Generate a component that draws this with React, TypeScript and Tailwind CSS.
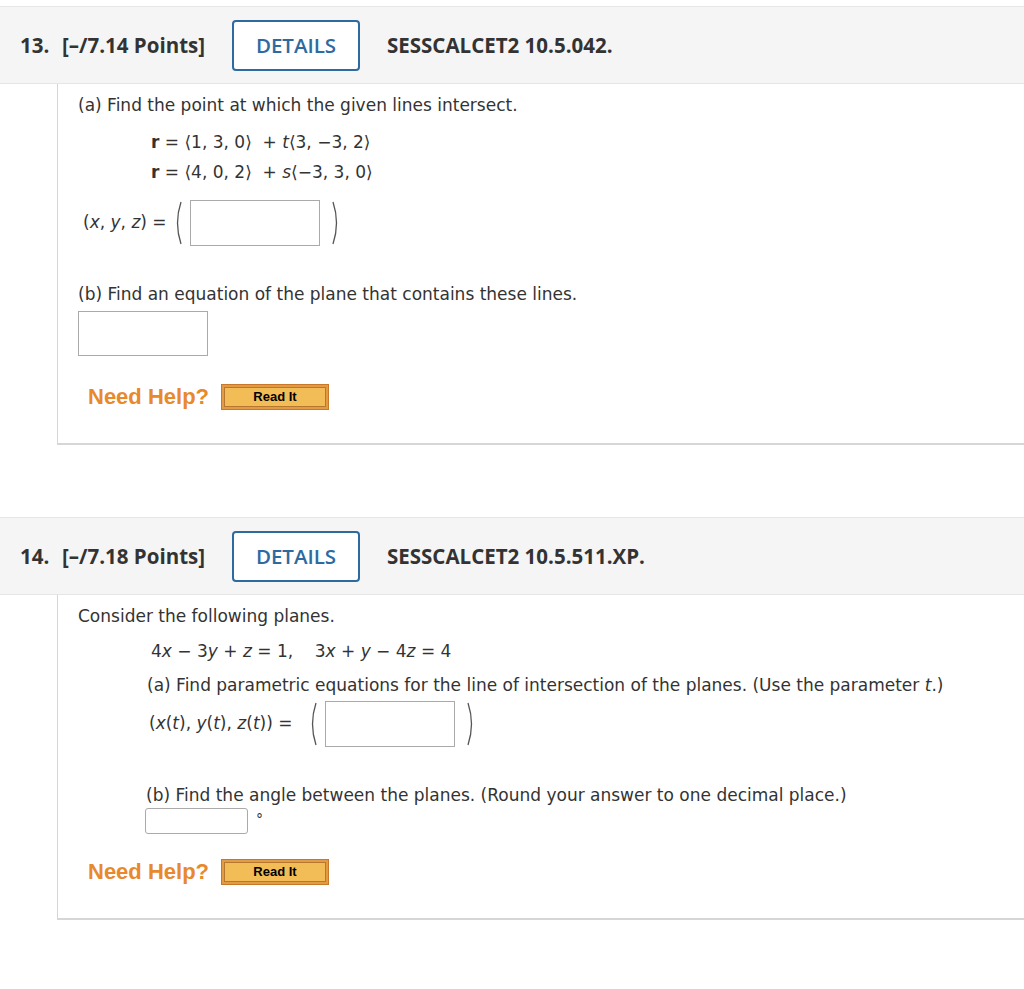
import React from 'react'

const body = { fontFamily: '"DejaVu Sans", Verdana, sans-serif' }
const head = { fontFamily: '"Open Sans", sans-serif' }
const helpFont = { fontFamily: '"Liberation Sans", Arial, sans-serif' }

function Header({ num, points, code }: { num: string; points: string; code: string }) {
  return (
    <div
      className="flex items-center h-[78px] bg-[#f5f5f5] border-y border-[#e6e6e6] pl-[20px] text-[#333] font-bold"
      style={head}
    >
      <span className="text-[20.5px] w-[42px]">{num}</span>
      <span className="text-[20.5px]">{points}</span>
      <button className="ml-[27px] w-[128px] h-[51px] rounded-[4px] border-2 border-[#2d6a9f] bg-white text-[#2d6a9f] text-[20.5px] font-semibold">
        DETAILS
      </button>
      <span className="ml-[27px] text-[20.5px]">{code}</span>
    </div>
  )
}

function NeedHelp() {
  return (
    <div className="flex items-center gap-[12px]" style={helpFont}>
      <span className="text-[22px] font-bold text-[#e8892b]">Need Help?</span>
      <button className="w-[108px] h-[26px] bg-[#e39a45] p-[2px] border border-[#c9782a]">
        <span className="flex items-center justify-center h-full bg-[#f2bc57] border border-[#b8772e] text-[13px] font-bold text-black">
          Read It
        </span>
      </button>
    </div>
  )
}

function Paren({ right }: { right?: boolean }) {
  return (
    <svg width="10" height="46" viewBox="0 0 10 46" className="block">
      <path
        d={right ? 'M2 2 Q9 23 2 44' : 'M8 2 Q1 23 8 44'}
        fill="none"
        stroke="#555"
        strokeWidth="1.3"
      />
    </svg>
  )
}

function AnswerRow({ label, pl, gap }: { label: React.ReactNode; pl: string; gap: string }) {
  return (
    <div className={`flex items-center ${pl}`}>
      <span className="text-[17px]">{label}</span>
      <span className={gap}><Paren /></span>
      <div className="ml-[7px] w-[130px] h-[46px] border border-[#aaa] bg-white"></div>
      <span className="ml-[11px]"><Paren right /></span>
    </div>
  )
}

export default function App() {
  return (
    <div className="bg-white min-h-[989px] pt-[6px] text-[#333] text-[17px]" style={body}>
      <Header num="13." points="[–/7.14 Points]" code="SESSCALCET2 10.5.042." />
      <div className="ml-[57px] border-l border-b-2 border-[#d6d6d6] h-[361px] pl-[20px] pt-[10px]">
        <p className="leading-[22px]">(a) Find the point at which the given lines intersect.</p>
        <div className="pl-[73px] mt-[15px] leading-[22px]">
          <p><b>r</b> = ⟨1, 3, 0⟩ &nbsp;+ <i>t</i>⟨3, −3, 2⟩</p>
          <p className="mt-[8px]"><b>r</b> = ⟨4, 0, 2⟩ &nbsp;+ <i>s</i>⟨−3, 3, 0⟩</p>
        </div>
        <div className="mt-[17px]">
          <AnswerRow pl="pl-[5px]" gap="ml-[6px]" label={<>(<i>x</i>, <i>y</i>, <i>z</i>) =</>} />
        </div>
        <p className="mt-[37px] leading-[22px]">(b) Find an equation of the plane that contains these lines.</p>
        <div className="mt-[6px] w-[130px] h-[45px] border border-[#aaa]"></div>
        <div className="mt-[24px] ml-[10px]">
          <NeedHelp />
        </div>
      </div>
      <div className="h-[72px]"></div>
      <Header num="14." points="[–/7.18 Points]" code="SESSCALCET2 10.5.511.XP." />
      <div className="ml-[57px] border-l border-b-2 border-[#d6d6d6] h-[325px] pl-[20px] pt-[10px]">
        <p className="leading-[22px]">Consider the following planes.</p>
        <div className="pl-[73px] mt-[13px] leading-[22px]">
          <p>4<i>x</i> − 3<i>y</i> + <i>z</i> = 1,&nbsp;&nbsp;&nbsp; 3<i>x</i> + <i>y</i> − 4<i>z</i> = 4</p>
        </div>
        <p className="pl-[69px] mt-[12px] leading-[22px]">(a) Find parametric equations for the line of intersection of the planes. (Use the parameter <i>t</i>.)</p>
        <div className="mt-[5px]">
          <AnswerRow pl="pl-[71px]" gap="ml-[16px]" label={<>(<i>x</i>(<i>t</i>), <i>y</i>(<i>t</i>), <i>z</i>(<i>t</i>)) =</>} />
        </div>
        <p className="pl-[68px] mt-[37px] leading-[22px]">(b) Find the angle between the planes. (Round your answer to one decimal place.)</p>
        <div className="flex items-start pl-[67px] mt-[2px]">
          <div className="w-[103px] h-[26px] border border-[#aaa] rounded-[3px]"></div>
          <span className="ml-[8px] mt-[3px] text-[14px] leading-[16px]">°</span>
        </div>
        <div className="mt-[21px] ml-[10px]">
          <NeedHelp />
        </div>
      </div>
    </div>
  )
}
